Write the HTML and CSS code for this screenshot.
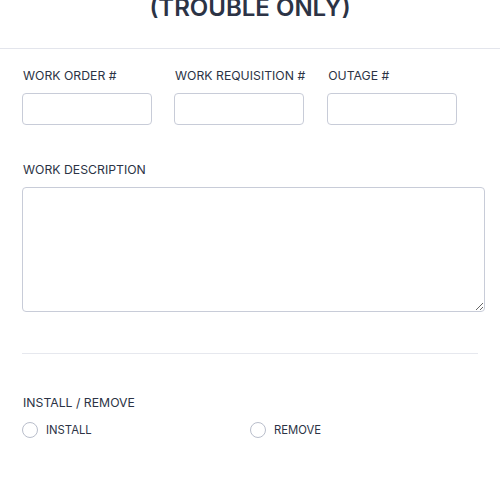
FILE: index.html
```html
<!DOCTYPE html>
<html lang="en">
<head>
    <meta charset="UTF-8">
    <meta name="viewport" content="width=device-width, initial-scale=1.0">
    <title>Work Order</title>
    <link rel="stylesheet" href="styles.css">
</head>
<body>
    <header class="form-header">
        <h1 class="form-title">(TROUBLE ONLY)</h1>
    </header>
    <form class="form-body" id="workOrderForm">
        <div class="field-row">
            <div class="field">
                <label for="workOrder">WORK ORDER #</label>
                <input type="text" id="workOrder" name="workOrder">
            </div>
            <div class="field">
                <label for="workRequisition">WORK REQUISITION #</label>
                <input type="text" id="workRequisition" name="workRequisition">
            </div>
            <div class="field">
                <label for="outage">OUTAGE #</label>
                <input type="text" id="outage" name="outage">
            </div>
        </div>
        <div class="field">
            <label for="workDescription">WORK DESCRIPTION</label>
            <textarea id="workDescription" name="workDescription"></textarea>
        </div>
        <hr class="divider">
        <div class="field">
            <span class="field-label">INSTALL / REMOVE</span>
            <div class="radio-row">
                <label class="radio-option">
                    <input type="radio" name="installRemove" value="install">
                    <span>INSTALL</span>
                </label>
                <label class="radio-option">
                    <input type="radio" name="installRemove" value="remove">
                    <span>REMOVE</span>
                </label>
            </div>
        </div>
    </form>
</body>
</html>
```

FILE: styles.css
```css
body {
    margin: 0;
    background-color: #ffffff;
    font-family: Inter, "Noto Sans", sans-serif;
    color: #2c3345;
    overflow: hidden;
}

.form-header {
    text-align: center;
    padding-bottom: 28px;
    border-bottom: 1px solid #e3e5ec;
}

.form-title {
    margin: -4px 0 0;
    font-size: 24px;
    line-height: 24px;
    font-weight: 600;
    color: #2c3345;
}

.form-body {
    padding: 18px 22px 0;
}

.field-row {
    display: flex;
    gap: 22px;
    margin-bottom: 36px;
}

.field-row .field {
    flex: 0 0 130px;
    white-space: nowrap;
}

.field label,
.field-label {
    display: block;
    padding-left: 1px;
    font-size: 12.25px;
    line-height: 17px;
    margin-bottom: 9px;
}

.field input[type="text"] {
    box-sizing: border-box;
    width: 130px;
    height: 32px;
    margin: 0;
    border: 1px solid #c8ccd8;
    border-radius: 4px;
    outline: none;
}

textarea {
    display: block;
    box-sizing: border-box;
    width: 463px;
    height: 125px;
    margin: 0;
    border: 1px solid #c8ccd8;
    border-radius: 4px;
    outline: none;
}

.divider {
    margin: 41px 0 40px;
    border: none;
    border-top: 1px solid #e6e8ee;
}

.radio-row {
    display: flex;
    margin-top: 10px;
}

.field .radio-option {
    display: flex;
    align-items: center;
    gap: 8px;
    width: 228px;
    margin: 0;
    padding-left: 0;
    font-size: 11.3px;
    line-height: 18px;
}

.radio-option input {
    appearance: none;
    box-sizing: border-box;
    width: 16px;
    height: 16px;
    margin: 0;
    border: 1px solid #b9becb;
    border-radius: 50%;
}
```
